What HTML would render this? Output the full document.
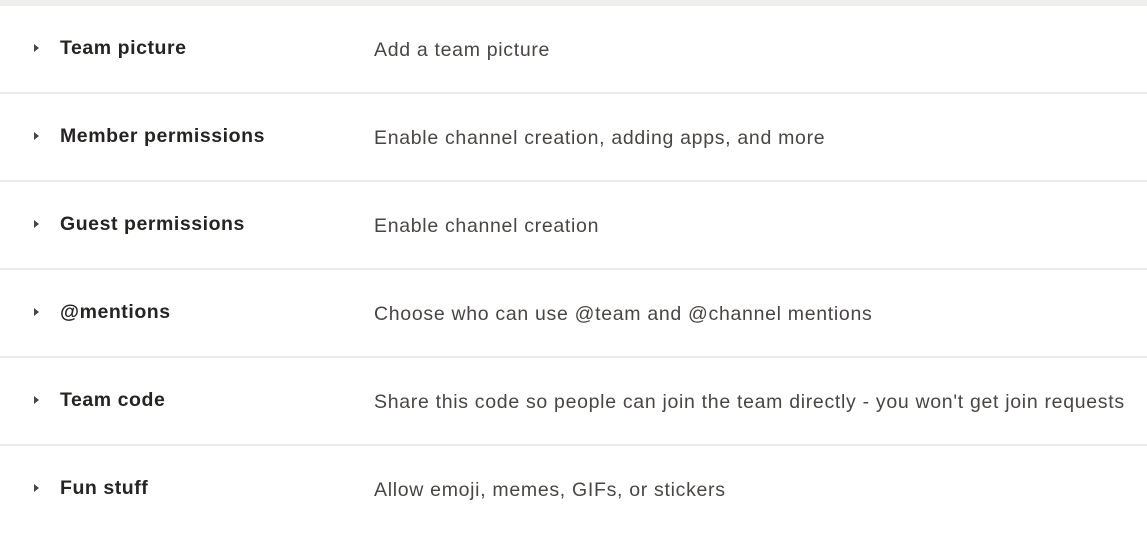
<!DOCTYPE html>
<html><head><style>
body{margin:0;width:1147px;height:534px;background:#fff;font-family:"Liberation Sans",sans-serif;overflow:hidden}
.top{height:6px;background:#f1f0ef}
.row{height:86px;border-bottom:2px solid #edebe9;position:relative}
.row:last-child{border-bottom:none}
.tri{position:absolute;left:34px;top:38px;width:0;height:0;border-top:4px solid transparent;border-bottom:4px solid transparent;border-left:5px solid #484644}
.t{position:absolute;left:60px;top:31px;font-size:19.5px;font-weight:bold;color:#252423;letter-spacing:0.55px}
.d{position:absolute;left:374px;top:33px;font-size:19.5px;color:#484644;white-space:nowrap;letter-spacing:0.69px}
</style></head><body>
<div class="top"></div>
<div class="row"><div class="tri"></div><div class="t">Team picture</div><div class="d">Add a team picture</div></div>
<div class="row"><div class="tri"></div><div class="t">Member permissions</div><div class="d">Enable channel creation, adding apps, and more</div></div>
<div class="row"><div class="tri"></div><div class="t">Guest permissions</div><div class="d">Enable channel creation</div></div>
<div class="row"><div class="tri"></div><div class="t">@mentions</div><div class="d">Choose who can use @team and @channel mentions</div></div>
<div class="row"><div class="tri"></div><div class="t">Team code</div><div class="d">Share this code so people can join the team directly - you won't get join requests</div></div>
<div class="row"><div class="tri"></div><div class="t">Fun stuff</div><div class="d">Allow emoji, memes, GIFs, or stickers</div></div>
</body></html>
